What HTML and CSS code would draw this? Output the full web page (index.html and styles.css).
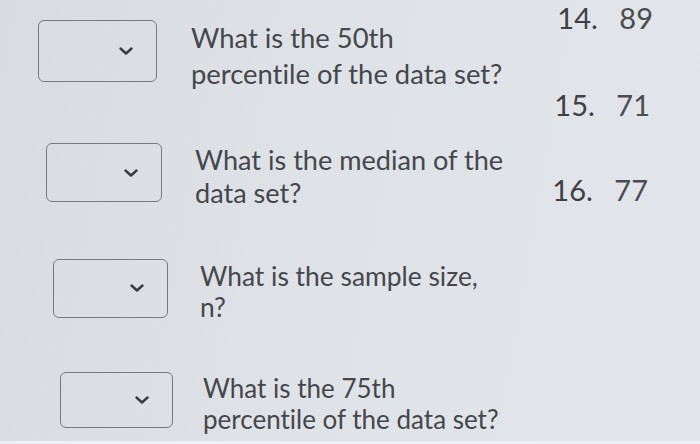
FILE: index.html
```html
<!DOCTYPE html>
<html>
<head>
<meta charset="utf-8">
<link rel="stylesheet" href="styles.css">
</head>
<body>
<div class="page">
  <div class="questions">
    <div class="q q1">
      <div class="select"><svg class="chev" viewBox="0 0 14 8" width="14" height="8"><path d="M1.5 1.5 L7 6.5 L12.5 1.5" fill="none" stroke="#3b3c40" stroke-width="2.4" stroke-linecap="round" stroke-linejoin="round"/></svg></div>
      <div class="qtext">What is the 50th<br>percentile of the data set?</div>
    </div>
    <div class="q q2">
      <div class="select"><svg class="chev" viewBox="0 0 14 8" width="14" height="8"><path d="M1.5 1.5 L7 6.5 L12.5 1.5" fill="none" stroke="#3b3c40" stroke-width="2.4" stroke-linecap="round" stroke-linejoin="round"/></svg></div>
      <div class="qtext">What is the median of the<br>data set?</div>
    </div>
    <div class="q q3">
      <div class="select"><svg class="chev" viewBox="0 0 14 8" width="14" height="8"><path d="M1.5 1.5 L7 6.5 L12.5 1.5" fill="none" stroke="#3b3c40" stroke-width="2.4" stroke-linecap="round" stroke-linejoin="round"/></svg></div>
      <div class="qtext">What is the sample size,<br>n?</div>
    </div>
    <div class="q q4">
      <div class="select"><svg class="chev" viewBox="0 0 14 8" width="14" height="8"><path d="M1.5 1.5 L7 6.5 L12.5 1.5" fill="none" stroke="#3b3c40" stroke-width="2.4" stroke-linecap="round" stroke-linejoin="round"/></svg></div>
      <div class="qtext">What is the 75th<br>percentile of the data set?</div>
    </div>
  </div>
  <ol class="answers">
    <li class="a a1"><span class="num">14.</span><span class="val">89</span></li>
    <li class="a a2"><span class="num">15.</span><span class="val">71</span></li>
    <li class="a a3"><span class="num">16.</span><span class="val">77</span></li>
  </ol>
</div>
</body>
</html>
```

FILE: styles.css
```css
html, body {
  margin: 0;
  padding: 0;
}
body {
  width: 700px;
  height: 444px;
  overflow: hidden;
  background: linear-gradient(100deg, #d8dce1 0%, #dfe3e8 45%, #e2e6eb 100%);
  font-family: Lato, "Open Sans", sans-serif;
  font-variant-ligatures: none;
  color: #45474b;
}
.page {
  display: flex;
  height: 441px;
  border-bottom: 3px solid #eef0f3;
  overflow: hidden;
}
.questions {
  display: flex;
  flex-direction: column;
}
.q {
  display: flex;
  align-items: flex-start;
  height: 70px;
}
.select {
  box-sizing: border-box;
  width: 116px;
  height: 59px;
  border: 1.5px solid #77797d;
  border-radius: 6px;
  display: flex;
  align-items: center;
  justify-content: flex-end;
  padding-right: 23px;
}
.chev {
  display: block;
}
.qtext {
  white-space: nowrap;
}
.q1 { margin-top: 20px; margin-left: 38px; }
.q1 .select { width: 119px; height: 62px; }
.q1 .qtext { margin-left: 34px; font-size: 27.4px; line-height: 35.5px; }
.q2 { margin-top: 53px; margin-left: 46px; }
.q2 .qtext { margin-left: 33px; font-size: 27.1px; line-height: 33px; }
.q3 { margin-top: 47px; margin-left: 53px; }
.q3 .select { width: 115px; }
.q3 .qtext { margin: 2px 0 0 32px; font-size: 26.4px; line-height: 31px; }
.q4 { margin-top: 45px; margin-left: 60px; }
.q4 .select { width: 113px; height: 56px; }
.q4 .qtext { margin: 1px 0 0 30px; font-size: 26px; line-height: 31px; }

.answers {
  list-style: none;
  margin: 0 0 0 auto;
  padding: 0 47px 0 0;
  display: flex;
  flex-direction: column;
}
.a {
  display: flex;
  font-size: 29px;
  line-height: 35px;
}
.num {
  width: 62px;
  color: #3e4044;
}
.val {
  color: #4a4c50;
}
.a1 { margin-top: 0; margin-left: 5px; }
.a2 { margin-top: 52px; margin-left: 2px; }
.a3 { margin-top: 50px; margin-left: 0; }
```
